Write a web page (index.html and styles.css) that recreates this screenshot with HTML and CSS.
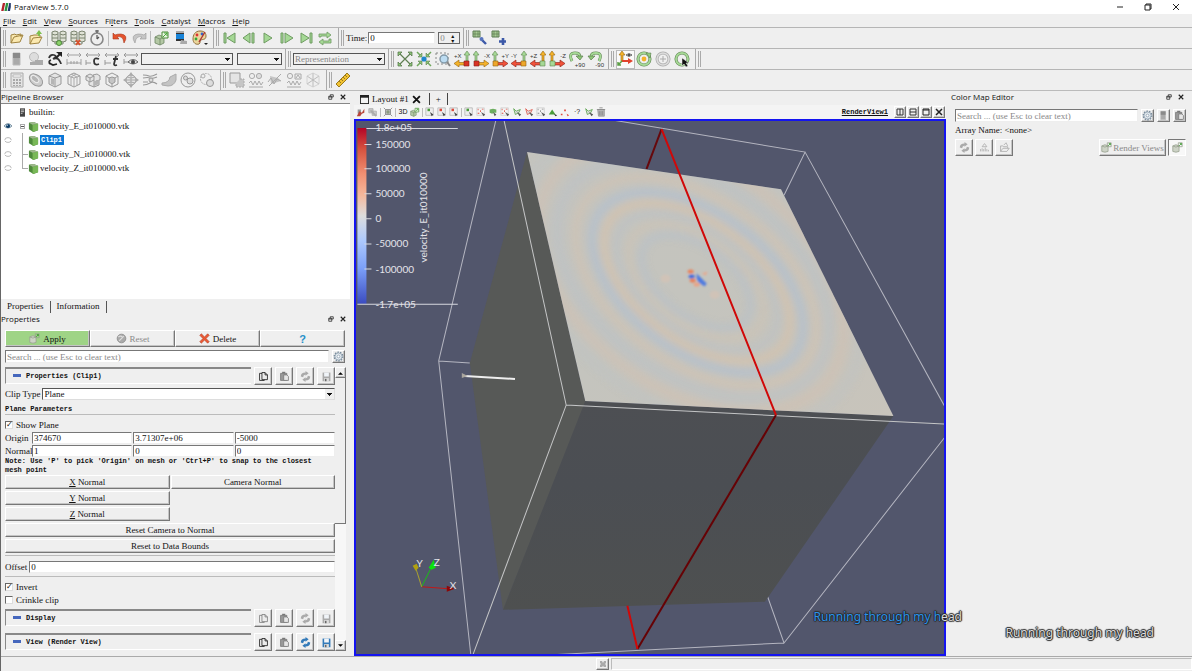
FILE: index.html
```
<!DOCTYPE html>
<html lang="en">
<head>
  <meta charset="UTF-8" />
  <meta name="viewport" content="width=device-width, initial-scale=1.0" />
  <title>ParaView 5.7.0</title>
  <link rel="stylesheet" href="styles.css">
</head>
<body>
  <!-- icon set -->
  <svg class="defs" aria-hidden="true">
    <symbol id="folder" viewBox="0 0 16 16"><path d="M2 13V5l4-1 1 1 5-1v3M2 13l3-6 9-2-3 7z" fill="#fbe9b0" stroke="#a08440"/></symbol>
    <symbol id="folder-up" viewBox="0 0 16 16"><path d="M2 14V6l4-1 6 0v3M2 14l3-6 9-1-3 6z" fill="#fbe9b0" stroke="#a08440"/><path d="M10 6V4H8l3-4 3 4h-2v2z" fill="#7cc04c"/></symbol>
    <symbol id="server" viewBox="0 0 16 16"><path d="M1 2q3-2 6 0v9q-3 2-6 0zM9 2q3-2 6 0v9q-3 2-6 0z" fill="#dfe2d6" stroke="#7b8470"/><path d="M1 4q3 2 6 0m2 0q3 2 6 0M1 8h6m2 0h6M4 12v2h8v-2" fill="none" stroke="#7b8470"/></symbol>
    <symbol id="server-on" viewBox="0 0 16 16"><use href="#server"/><circle cx="8" cy="13" r="2.5" fill="#8ed36c" stroke="#4b8a38"/></symbol>
    <symbol id="server-off" viewBox="0 0 16 16"><use href="#server"/><path d="M6 10l4 5m0-5l-4 5" stroke="#d8512c" stroke-width="2"/></symbol>
    <symbol id="timer" viewBox="0 0 16 16"><circle cx="8" cy="9" r="6" fill="#eee" stroke="#888" stroke-width="1.600"/><path d="M8 9V5m0 4l2-2M8 0v3M6 1h4" stroke="#555" stroke-width="1.2"/></symbol>
    <symbol id="undo" viewBox="0 0 16 16"><path d="M1 3v6h6L5 7q6-2 7 6 5-8-3-9-4 0-6 1z" fill="#e5532d" stroke="#a8371c" stroke-width=".6"/></symbol>
    <symbol id="redo" viewBox="0 0 16 16"><path d="M15 3v6H9l2-2q-6-2-7 6-5-8 3-9 4 0 6 1z" fill="#c6c6c6" stroke="#999" stroke-width=".6"/></symbol>
    <symbol id="cube-arrow" viewBox="0 0 16 16"><path d="M1 7l4-2 5 2v6l-4 2-5-2z" fill="#b4c8a5" stroke="#6d8563" stroke-width=".8"/><path d="M1 7l5 2 4-2M6 9v6" fill="none" stroke="#6d8563" stroke-width=".8"/><path d="M8 2h6v6H8z" fill="#e9f4e2" stroke="#4b8a38"/><path d="M9 7l4-4m-3 0h3v3" fill="none" stroke="#4aa63a"/></symbol>
    <symbol id="zoom-data" viewBox="0 0 16 16"><path d="M3 1h8v10H3z" fill="#333"/><path d="M3 4h8v5H3z" fill="#1984d8"/><path d="M3 1h8v2H3zM8 10l6 1v3H7z" fill="#aaa"/></symbol>
    <symbol id="palette" viewBox="0 0 16 16"><path d="M8 1C3 1 1 5 1 9s3 6 6 5c2-1 0-3 2-4s5 0 5-4-3-5-6-5z" fill="#ecd49c" stroke="#8f713c"/><circle cx="5" cy="5" r="1.4" fill="#d33"/><circle cx="10" cy="4" r="1.4" fill="#36c"/><circle cx="4" cy="9" r="1.4" fill="#3a3"/><path d="M13 2L7 12" stroke="#a33" stroke-width="1.4"/><path d="M12 13h4l-2 2z" fill="#222"/></symbol>
    <symbol id="first" viewBox="0 0 16 16"><path d="M2 3h2v10H2zM13 3v10L5 8z" fill="#a5d895" stroke="#6f9b62"/></symbol>
    <symbol id="last" viewBox="0 0 16 16"><path d="M12 3h2v10h-2zM3 3v10l8-5z" fill="#a5d895" stroke="#6f9b62"/></symbol>
    <symbol id="prev" viewBox="0 0 16 16"><path d="M11 3h2v10h-2zM9 3v10L2 8z" fill="#a5d895" stroke="#6f9b62"/></symbol>
    <symbol id="next" viewBox="0 0 16 16"><path d="M2 3h2v10H2zM6 3v10l8-5z" fill="#a5d895" stroke="#6f9b62"/></symbol>
    <symbol id="play" viewBox="0 0 16 16"><path d="M4 3v10l8-5z" fill="#a5d895" stroke="#6f9b62"/></symbol>
    <symbol id="loop" viewBox="0 0 16 16"><path d="M2 7V4h8V2l4 3-4 3V6H4v1zM14 9v4H6v2l-4-3 4-3v2h6V9z" fill="#a5d895" stroke="#6f9b62" stroke-width=".8"/></symbol>
    <symbol id="wrench" viewBox="0 0 16 16"><path d="M1 1h7v6H1z" fill="#a9cc95" stroke="#5d7c52"/><path d="M3 1v6M1 4h7M6 1v6" stroke="#5d7c52" stroke-width=".7"/><path d="M9 9l5 5" stroke="#3c59a8" stroke-width="2.4"/><circle cx="9.500" cy="9" r="2" fill="#5774bd"/></symbol>
    <symbol id="wrench-plus" viewBox="0 0 16 16"><path d="M1 1h7v6H1z" fill="#a9cc95" stroke="#5d7c52"/><path d="M3 1v6M1 4h7M6 1v6" stroke="#5d7c52" stroke-width=".7"/><path d="M12 8v7M8 11.500h7" stroke="#3c59a8" stroke-width="2.600"/></symbol>
    <symbol id="legend" viewBox="0 0 16 16"><path d="M4 2h7v12H4z" fill="#aaa" stroke="#bbb"/><path d="M4 2h7v5H4z" fill="#8a8a8a"/></symbol>
    <symbol id="shapes" viewBox="0 0 16 16"><circle cx="6" cy="6" r="4.500" fill="#ddd" stroke="#bbb"/><path d="M7 9h8v5H7zM2 11h5v3H2z" fill="#aaa"/></symbol>
    <symbol id="rescale-data" viewBox="0 0 16 16"><path d="M2 7q1-4 5-3t-1 4q4-2 6 1t2 4M3 13q-2-3 1-4" fill="none" stroke="#333" stroke-width="1.800"/><path d="M9 1h6v5z" fill="#222"/><path d="M9 7l4-4M2 12l4 2 4-1" fill="none" stroke="#222" stroke-width="1.800"/></symbol>
    <symbol id="range" viewBox="0 0 16 16"><path d="M1 4h14M3 2L1 4l2 2m10-4l2 2-2 2M1 8v6m14-6v6M1 12h14M5 10v3m3-3v3m3-3v3" fill="none" stroke="#999" stroke-width=".9"/></symbol>
    <symbol id="range-c" viewBox="0 0 16 16"><path d="M1 4h14M3 2L1 4l2 2m10-4l2 2-2 2M1 9v5m0-2h5" fill="none" stroke="#999"/><path d="M14 8q-5-2-5 2 0 5 5 3" fill="none" stroke="#333" stroke-width="1.800"/></symbol>
    <symbol id="range-t" viewBox="0 0 16 16"><path d="M1 4h14M3 2L1 4l2 2m10-4l2 2-2 2M1 9v5m0-2h6" fill="none" stroke="#999"/><path d="M12 5l-2 8q0 2 3 1M9 8h5" fill="none" stroke="#333" stroke-width="1.800"/></symbol>
    <symbol id="range-eye" viewBox="0 0 16 16"><path d="M1 4h14M3 2L1 4l2 2m10-4l2 2-2 2M1 8v5m0-2h5" fill="none" stroke="#999"/><path d="M5 11q5-5 10 0-5 4-10 0z" fill="#ddd" stroke="#666"/><circle cx="10" cy="11" r="2" fill="#444"/></symbol>
    <symbol id="reset" viewBox="0 0 16 16"><path d="M3 3l10 10M13 3L3 13" stroke="#5f7e52" stroke-width="1.200"/><path d="M1 1h4L1 5zM15 1v4l-4-4zM1 15v-4l4 4zM15 15h-4l4-4z" fill="#8dc578" stroke="#4f6e42" stroke-width=".7"/></symbol>
    <symbol id="zoom-to" viewBox="0 0 16 16"><path d="M1 1l4 4m10-4l-4 4M1 15l4-4m10 4l-4-4" stroke="#6fa75b" stroke-width="1.500"/><path d="M6 2v4H2zM10 2v4h4zM6 14v-4H2zM10 14v-4h4z" fill="#8dc578" stroke="#4f6e42" stroke-width=".5"/><circle cx="8" cy="8" r="2.600" fill="#1e86cd"/></symbol>
    <symbol id="zoom-box" viewBox="0 0 16 16"><path d="M1 2h12v11H1z" fill="none" stroke="#888" stroke-dasharray="2 2"/><circle cx="9" cy="8" r="4" fill="#bcdcf2" stroke="#8399a8" stroke-width="1.500"/><path d="M12 11l3 4" stroke="#888" stroke-width="2"/></symbol>
    <symbol id="ax-left" viewBox="0 0 16 16"><path d="M12 10V4h-2l3-4 3 4h-2v6z" fill="#a5d895" stroke="#5f8352" stroke-width=".6"/><path d="M11 11.500H5V9l-5 3.500L5 16v-2h6z" fill="#f4b22a" stroke="#926311" stroke-width=".6"/><path d="M10 10h5v5h-5z" fill="#d93425" stroke="#842018" stroke-width=".6"/></symbol>
    <symbol id="ax-right" viewBox="0 0 16 16"><path d="M2 10V4H0l3-4 3 4H4v6z" fill="#a5d895" stroke="#5f8352" stroke-width=".6"/><path d="M5 11.500h6V9l5 3.500L11 16v-2H5z" fill="#f0523a" stroke="#842018" stroke-width=".6"/><path d="M1 10h5v5H1z" fill="#eea72b" stroke="#926311" stroke-width=".6"/></symbol>
    <symbol id="ax-minus-x" viewBox="0 0 16 16"><path d="M2 10V4H0l3-4 3 4H4v6z" fill="#a5d895" stroke="#5f8352" stroke-width=".6"/><path d="M5 11.500h6V9l5 3.500L11 16v-2H5z" fill="#f4b22a" stroke="#926311" stroke-width=".6"/><path d="M1 10h5v5H1z" fill="#d93425" stroke="#842018" stroke-width=".6"/></symbol>
    <symbol id="ax-minus-y" viewBox="0 0 16 16"><path d="M12 10V4h-2l3-4 3 4h-2v6z" fill="#a5d895" stroke="#5f8352" stroke-width=".6"/><path d="M11 11.500H5V9l-5 3.500L5 16v-2h6z" fill="#f0523a" stroke="#842018" stroke-width=".6"/><path d="M10 10h5v5h-5z" fill="#eea72b" stroke="#926311" stroke-width=".6"/></symbol>
    <symbol id="ax-plus-z" viewBox="0 0 16 16"><path d="M12 10V4h-2l3-4 3 4h-2v6z" fill="#f4b22a" stroke="#926311" stroke-width=".6"/><path d="M11 11.500H5V9l-5 3.500L5 16v-2h6z" fill="#f0523a" stroke="#842018" stroke-width=".6"/><path d="M10 10h5v5h-5z" fill="#a5d895" stroke="#5f8352" stroke-width=".6"/></symbol>
    <symbol id="ax-minus-z" viewBox="0 0 16 16"><path d="M2 10V4H0l3-4 3 4H4v6z" fill="#f4b22a" stroke="#926311" stroke-width=".6"/><path d="M5 11.500h6V9l5 3.500L11 16v-2H5z" fill="#f0523a" stroke="#842018" stroke-width=".6"/><path d="M1 10h5v5H1z" fill="#a5d895" stroke="#5f8352" stroke-width=".6"/></symbol>
    <symbol id="rot-r" viewBox="0 0 16 16"><path d="M4 10Q0 2 7 2q5 0 5 4" fill="none" stroke="#5f8352" stroke-width="2.800"/><path d="M4 10Q0 2 7 2q5 0 5 4" fill="none" stroke="#a5d895" stroke-width="1.800"/><path d="M8 5h7l-3 4z" fill="#8dc578" stroke="#4f6e42" stroke-width=".6"/></symbol>
    <symbol id="rot-l" viewBox="0 0 16 16"><path d="M12 10q4-8-3-8-5 0-5 4" fill="none" stroke="#5f8352" stroke-width="2.800"/><path d="M12 10q4-8-3-8-5 0-5 4" fill="none" stroke="#a5d895" stroke-width="1.800"/><path d="M1 5h7L4 9z" fill="#8dc578" stroke="#4f6e42" stroke-width=".6"/></symbol>
    <symbol id="orient" viewBox="0 0 16 16"><path d="M4 10V4H2l3-4 3 4H6v6z" fill="#f4b22a" stroke="#926311" stroke-width=".6"/><path d="M5 9h6V7l5 3-5 3v-2H5z" fill="#e1432e"/><path d="M5 10l-4 4m0-3v3h3" fill="none" stroke="#5b9e45" stroke-width="1.500"/><path d="M9 4q3-3 6 0-3 3-6 0z" fill="#fff" stroke="#444" stroke-width=".8"/><circle cx="12" cy="4" r="1" fill="#222"/></symbol>
    <symbol id="center" viewBox="0 0 16 16"><circle cx="8" cy="8" r="6" fill="none" stroke="#5f8352" stroke-width="3"/><circle cx="8" cy="8" r="6" fill="none" stroke="#a5d895" stroke-width="1.800"/><path d="M10 2l5 0-1 5z" fill="#93cf80" stroke="#4f6e42" stroke-width=".5"/><circle cx="8" cy="8" r="2.400" fill="#f4b22a"/></symbol>
    <symbol id="center-off" viewBox="0 0 16 16"><circle cx="8" cy="8" r="6" fill="none" stroke="#aaa" stroke-width="3"/><circle cx="8" cy="8" r="6" fill="none" stroke="#dcdcdc" stroke-width="1.600"/><path d="M8 5v6M5 8h6" stroke="#aaa"/></symbol>
    <symbol id="pick" viewBox="0 0 16 16"><circle cx="8" cy="8" r="6" fill="none" stroke="#5f8352" stroke-width="3"/><circle cx="8" cy="8" r="6" fill="none" stroke="#a5d895" stroke-width="1.800"/><path d="M8 7v8l2-2 2 3 2-1-2-3h3z" fill="#111" stroke="#eee" stroke-width=".5"/></symbol>
    <symbol id="calc" viewBox="0 0 16 16"><path d="M2 1h12v14H2z" fill="#e4e4e4" stroke="#aaa"/><path d="M4 3h8v2H4z" fill="#fff" stroke="#999" stroke-width=".6"/><path d="M5 7v7m3-7v7m3-7v7" stroke="#999" stroke-width="1.600" stroke-dasharray="2 1"/></symbol>
    <symbol id="contour" viewBox="0 0 16 16"><ellipse cx="8" cy="8" rx="7.500" ry="5" transform="rotate(40 8 8)" fill="#ccc" stroke="#999"/><ellipse cx="7" cy="7" rx="4.500" ry="2.500" transform="rotate(40 7 7)" fill="#b5b5b5" stroke="#eee"/></symbol>
    <symbol id="cube" viewBox="0 0 16 16"><path d="M2 4l6-3 6 3v8l-6 3-6-3z" fill="#e4e4e4" stroke="#999"/><path d="M2 4l6 2 6-2M8 6v9" fill="none" stroke="#999"/><path d="M4 6l3 1v6l-3-1z" fill="#b5b5b5"/></symbol>
    <symbol id="cube2" viewBox="0 0 16 16"><path d="M2 4l6-3 6 3v8l-6 3-6-3z" fill="#eee" stroke="#999"/><path d="M2 4l6 2 6-2M8 6v9M5 2l6 3v8M10 2L5 5v8" fill="none" stroke="#aaa"/></symbol>
    <symbol id="cube3" viewBox="0 0 16 16"><path d="M2 4l6-3 6 3v8l-6 3-6-3z" fill="#eee" stroke="#999"/><path d="M5 6l3-1 3 1v4l-3 2-3-2z" fill="#c5c5c5" stroke="#999"/><path d="M2 4l3 2m9-2l-3 2m-3 6v3" stroke="#999"/></symbol>
    <symbol id="blocks" viewBox="0 0 16 16"><path d="M1 4l4-2 4 2v4l-4 2-4-2zM8 3l4-1 3 2v4l-4 1M4 10v3l5 2 5-2V9" fill="#e4e4e4" stroke="#999"/><path d="M1 4l4 2 4-2M5 6v4m4-2v7" fill="none" stroke="#999"/><path d="M9 9l5-1v4l-5 2z" fill="#b5b5b5"/></symbol>
    <symbol id="glyph" viewBox="0 0 16 16"><circle cx="8" cy="8" r="5" fill="#e4e4e4" stroke="#999"/><path d="M8 3v10M3 8h10M4 5q4 2 8 0M4 11q4-2 8 0" fill="none" stroke="#aaa"/><path d="M8 0l2 3H6zM8 16l2-3H6zM0 8l3-2v4zM16 8l-3-2v4z" fill="#aaa"/></symbol>
    <symbol id="stream" viewBox="0 0 16 16"><path d="M1 3q4 0 6 1t8-2M1 6q5-1 7 0t7-1M1 13q4 0 7-2t7 1M1 10h5" fill="none" stroke="#999" stroke-width="1.200"/><circle cx="9" cy="8" r="2" fill="#ddd" stroke="#999"/></symbol>
    <symbol id="warp" viewBox="0 0 16 16"><path d="M1 11q7 0 8-6l6-3v6q-2 6-8 6l-6-1z" fill="#c4c4c4" stroke="#aaa"/></symbol>
    <symbol id="group" viewBox="0 0 16 16"><circle cx="8" cy="8" r="7" fill="#eee" stroke="#999"/><circle cx="5.500" cy="6" r="2" fill="#ddd" stroke="#999"/><circle cx="10" cy="9" r="3" fill="#ddd" stroke="#999"/></symbol>
    <symbol id="extract" viewBox="0 0 16 16"><circle cx="7" cy="7" r="5.500" fill="none" stroke="#aaa" stroke-dasharray="2 1"/><circle cx="4" cy="4" r="2" fill="#eee" stroke="#aaa"/><circle cx="11" cy="11" r="3.500" fill="#ddd" stroke="#999"/></symbol>
    <symbol id="select" viewBox="0 0 16 16"><path d="M1 1h10v10H1z" fill="#e4e4e4" stroke="#999"/><path d="M11 7h4v8H7v-4" fill="#c5c5c5" stroke="#aaa" stroke-dasharray="2 1"/></symbol>
    <symbol id="plot" viewBox="0 0 16 16"><circle cx="4" cy="4" r="2.600" fill="#eee" stroke="#aaa"/><circle cx="11" cy="4" r="2.600" fill="#ddd" stroke="#aaa"/><path d="M1 11l2-2 2 4 2-4 2 4 2-4 2 4 2-3M1 15h14" fill="none" stroke="#aaa"/></symbol>
    <symbol id="plot-sel" viewBox="0 0 16 16"><circle cx="4" cy="4" r="2.600" fill="#eee" stroke="#aaa"/><path d="M9 2h6v5H9zM10 6l2-3 2 3" fill="none" stroke="#aaa"/><path d="M1 11l2-2 2 4 2-4 2 4 2-4 2 4 2-3M1 15h14" fill="none" stroke="#aaa"/></symbol>
    <symbol id="plot-line" viewBox="0 0 16 16"><path d="M3 4l8 2 3 3-10 3z" fill="#c5c5c5"/><path d="M2 14L14 2M1 10l3-4 3 6 3-5 4 2" fill="none" stroke="#aaa"/></symbol>
    <symbol id="probe" viewBox="0 0 16 16"><path d="M8 1v14M2 4l12 8M14 4L2 12" fill="none" stroke="#bbb"/><path d="M2 4l6-3 6 3v8l-6 3-6-3z" fill="none" stroke="#ccc" stroke-width=".8"/></symbol>
    <symbol id="ruler" viewBox="0 0 16 16"><path d="M1 12L12 1l3 3L4 15z" fill="#f1c232" stroke="#9a7a1c"/><path d="M4 9l2 2m0-4l2 2m0-4l2 2m0-4l2 2" stroke="#9a7a1c"/></symbol>
    <symbol id="block" viewBox="0 0 12 12"><path d="M1 2l5-1 5 2v7l-5 2-5-3z" fill="#4f8a3c"/><path d="M5 4l6-1v7l-6 2z" fill="#79b857"/><path d="M1 2l5-1 5 2-6 1z" fill="#a0b98e"/></symbol>
    <symbol id="eye" viewBox="0 0 12 10"><path d="M1 5q5-6 10 0-5 5-10 0z" fill="#cfe3ef" stroke="#6a8090"/><circle cx="6" cy="5" r="2.600" fill="#0b3c66"/><circle cx="5" cy="4" r=".8" fill="#fff"/></symbol>
    <symbol id="eye-off" viewBox="0 0 12 10"><path d="M2 5q0-3 4-3t4 3M2 6q1 2 4 2t4-2" fill="none" stroke="#aaa"/></symbol>
    <symbol id="copy" viewBox="0 0 14 14"><path d="M2 3h6v9H2z" fill="#f4f4f4" stroke="currentColor"/><path d="M5 2h4l3 3v6H5z" fill="#ececec" stroke="currentColor"/><path d="M9 2v3h3" fill="none" stroke="currentColor"/></symbol>
    <symbol id="paste" viewBox="0 0 14 14"><path d="M2 3h8v9H2z" fill="#999" stroke="currentColor"/><path d="M4 1h4v2H4z" fill="currentColor"/><path d="M6 5h4l2 2v5H6z" fill="#e6e6e6" stroke="currentColor"/></symbol>
    <symbol id="reload" viewBox="0 0 14 14"><path d="M1 7q0-5 6-5V0l4 3-4 3V4.500Q4 5 4 8zM13 7q0 5-6 5v2l-4-3 4-3v1.500Q10 9 10 6z" fill="currentColor"/></symbol>
    <symbol id="save" viewBox="0 0 14 14"><path d="M2 2h10v11H2z" fill="currentColor"/><path d="M4 2h6v5H4z" fill="#f0f4f8"/><path d="M4 9h6v4H4z" fill="#ddd"/><path d="M5 10h2v3H5z" fill="#666"/></symbol>
    <symbol id="gear" viewBox="0 0 14 14"><circle cx="7" cy="7" r="5.500" fill="none" stroke="#75899a" stroke-width="1.600" stroke-dasharray="2 1.400"/><circle cx="7" cy="7" r="4.500" fill="#e3ebf1" stroke="#8b9cab"/><circle cx="7" cy="7" r="1.800" fill="#fff" stroke="#8b9cab"/></symbol>
    <symbol id="apply" viewBox="0 0 14 14"><path d="M1 5q4-3 8 0v7q-4 2-8 0z" fill="#cdd3c6" stroke="#98a18f"/><path d="M1 5q4 3 8 0M8 1h5v5H8z" fill="none" stroke="#98a18f"/><path d="M9 5l3-3m-2 0h2v2" stroke="#3b9a2f" fill="none"/></symbol>
    <symbol id="stop" viewBox="0 0 14 14"><circle cx="7" cy="7" r="5.500" fill="#aaa" stroke="#888"/><path d="M3 5q3-2 5 0M4 10l6-6" fill="none" stroke="#ddd" stroke-width="1.500"/></symbol>
    <symbol id="cross" viewBox="0 0 14 14"><path d="M3 1l4 4 4-4 2 2-4 4 4 4-2 2-4-4-4 4-2-2 4-4-4-4z" fill="#ea5b36" stroke="#ad3319" stroke-width=".7"/></symbol>
    <symbol id="v-undo" viewBox="0 0 12 12"><path d="M2 3h4v5H2z" fill="#999"/><path d="M1 11l3-6 3 2 3-5v5L7 8l-2 3z" fill="#b8453a"/></symbol>
    <symbol id="v-redo" viewBox="0 0 12 12"><path d="M1 2h5v5H1zM5 5h5v5H5z" fill="#ccc" stroke="#aaa"/><path d="M3 4l7 7" stroke="#aaa" stroke-width="2"/></symbol>
    <symbol id="v-cam" viewBox="0 0 12 12"><path d="M1 1l2 2m8-2L9 3M1 11l2-2m8 2L9 9M3 3h6v6H3z" fill="#bbb" stroke="#888"/><circle cx="6" cy="6" r="2" fill="#8b9b80"/></symbol>
    <symbol id="v-sel" viewBox="0 0 12 12"><path d="M1 1h9v9H1z" fill="#eee" stroke="#aaa" stroke-width=".8"/><path d="M3 2h3v3H3z" fill="currentColor"/><path d="M6 6l4 3-2 2z" fill="#444"/></symbol>
    <symbol id="v-pts" viewBox="0 0 12 12"><path d="M2 2h1v2H2zM7 2h2v1H7zM2 7h2v1H2zM5 4h1v2H5z" fill="currentColor"/><path d="M1 1h9v9H1z" fill="none" stroke="#bbb" stroke-width=".6"/><path d="M6 6l5 3-2 2z" fill="#555"/></symbol>
    <symbol id="v-poly" viewBox="0 0 12 12"><path d="M2 3l4-1 4 1v4H7L5 8 2 7z" fill="currentColor" opacity=".8"/><path d="M6 6l4 3-2 2z" fill="#555"/></symbol>
    <symbol id="v-lasso" viewBox="0 0 12 12"><path d="M2 2l3 3 5-2-2 4-4 2z" fill="#ddd" stroke="currentColor" stroke-width=".9"/><path d="M6 6l5 3-2 2z" fill="#555"/></symbol>
    <symbol id="v-tri" viewBox="0 0 12 12"><path d="M1 9l4-6 4 6z" fill="currentColor"/><path d="M7 8l4 2-2 1z" fill="#333"/></symbol>
    <symbol id="v-dots" viewBox="0 0 12 12"><path d="M1 8h2v2H1zM5 3h2v2H5zM8 8l3 2-2 1z" fill="currentColor"/></symbol>
    <symbol id="trash" viewBox="0 0 12 12"><path d="M2 3h8v8H3z" fill="#b5b5b5" stroke="#999"/><path d="M1 3h10M4 1h4M4 5v5m2-5v5m2-5v5" stroke="#888"/></symbol>
    <symbol id="restore" viewBox="0 0 8 8"><path d="M3 3V1h4v3H5M1 3h4v4H1zM1 4h4" fill="none" stroke="#222"/></symbol>
    <symbol id="close" viewBox="0 0 8 8"><path d="M1 1l6 6M7 1L1 7" stroke="#222" stroke-width="1.500"/></symbol>
  </svg>

  <header class="title-bar">
    <svg class="logo" viewBox="0 0 12 10"><path d="M2 0h3L3 10H0z" fill="#b3252c"/><path d="M6 0h3L7 10H4z" fill="#2b9340"/><path d="M10 0h2v5l-1 5H8z" fill="#21386d"/></svg>
    <span class="app-name">ParaView 5.7.0</span>
    <svg class="win" viewBox="0 0 8 8"><path d="M1 4h6" stroke="#222"/></svg>
    <svg class="win" viewBox="0 0 8 8"><path d="M1 2h5v5H1zM2 2V1h5v5H6" fill="none" stroke="#222"/></svg>
    <svg class="win" viewBox="0 0 8 8"><path d="M1 1l6 6M7 1L1 7" stroke="#222"/></svg>
  </header>

  <nav class="menu-bar">
    <a href="#"><u>F</u>ile</a><a href="#"><u>E</u>dit</a><a href="#"><u>V</u>iew</a><a href="#"><u>S</u>ources</a><a href="#">Fi<u>l</u>ters</a><a href="#"><u>T</u>ools</a><a href="#"><u>C</u>atalyst</a><a href="#"><u>M</u>acros</a><a href="#"><u>H</u>elp</a>
  </nav>

  <div class="frame">
    <div class="toolbar">
      <div class="group">
        <button aria-label="Open"><svg><use href="#folder"/></svg></button>
        <button aria-label="Load state"><svg><use href="#folder-up"/></svg></button>
        <i></i>
        <button aria-label="Connect"><svg><use href="#server-on"/></svg></button>
        <button aria-label="Disconnect"><svg><use href="#server-off"/></svg></button>
        <button aria-label="Timer"><svg><use href="#timer"/></svg></button>
        <i></i>
        <button aria-label="Undo"><svg><use href="#undo"/></svg></button>
        <button aria-label="Redo"><svg><use href="#redo"/></svg></button>
        <i></i>
        <button aria-label="Auto apply"><svg><use href="#cube-arrow"/></svg></button>
        <button aria-label="Find data"><svg><use href="#zoom-data"/></svg></button>
        <button aria-label="Palette"><svg><use href="#palette"/></svg></button>
      </div>
      <div class="group">
        <button aria-label="First frame"><svg><use href="#first"/></svg></button>
        <button aria-label="Previous frame"><svg><use href="#prev"/></svg></button>
        <button aria-label="Play"><svg><use href="#play"/></svg></button>
        <button aria-label="Next frame"><svg><use href="#next"/></svg></button>
        <button aria-label="Last frame"><svg><use href="#last"/></svg></button>
        <button aria-label="Loop"><svg><use href="#loop"/></svg></button>
      </div>
      <div class="group">
        <label for="time">Time:</label>
        <input id="time" class="field time" value="0">
        <span class="spin"><input aria-label="Time step" value="0"><b>▴<br>▾</b></span>
      </div>
      <div class="group last">
        <button aria-label="Favorites"><svg><use href="#wrench"/></svg></button>
        <button aria-label="Add favorite"><svg><use href="#wrench-plus"/></svg></button>
      </div>
    </div>

    <div class="toolbar">
      <div class="group">
        <button aria-label="Color legend"><svg><use href="#legend"/></svg></button>
        <button aria-label="Edit color map"><svg><use href="#shapes"/></svg></button>
        <button aria-label="Separate color map"><svg><use href="#rescale-data"/></svg></button>
        <button aria-label="Rescale to data"><svg><use href="#range"/></svg></button>
        <button aria-label="Rescale to custom"><svg><use href="#range-c"/></svg></button>
        <button aria-label="Rescale over time"><svg><use href="#range-t"/></svg></button>
        <button aria-label="Rescale to visible"><svg><use href="#range-eye"/></svg></button>
        <select class="combo off array" aria-label="Array"><option></option></select>
        <select class="combo off part" aria-label="Component"><option></option></select>
      </div>
      <div class="group">
        <select class="combo off array" aria-label="Representation"><option>Representation</option></select>
      </div>
      <div class="group">
        <button aria-label="Reset"><svg><use href="#reset"/></svg></button>
        <button aria-label="Zoom to data"><svg><use href="#zoom-to"/></svg></button>
        <button aria-label="Zoom to box"><svg><use href="#zoom-box"/></svg></button>
        <button class="axis l"><svg><use href="#ax-left"/></svg><em>+X</em></button>
        <button class="axis r"><svg><use href="#ax-minus-x"/></svg><em>-X</em></button>
        <button class="axis r"><svg><use href="#ax-right"/></svg><em>+Y</em></button>
        <button class="axis l"><svg><use href="#ax-minus-y"/></svg><em>-Y</em></button>
        <button class="axis l"><svg><use href="#ax-plus-z"/></svg><em>+Z</em></button>
        <button class="axis r"><svg><use href="#ax-minus-z"/></svg><em>-Z</em></button>
        <button class="axis d"><svg><use href="#rot-r"/></svg><em>+90</em></button>
        <button class="axis d"><svg><use href="#rot-l"/></svg><em>-90</em></button>
      </div>
      <div class="group">
        <button class="down" aria-label="Orientation axes"><svg><use href="#orient"/></svg></button>
        <button aria-label="Show center"><svg><use href="#center"/></svg></button>
        <button aria-label="Reset center"><svg><use href="#center-off"/></svg></button>
        <button aria-label="Pick center"><svg><use href="#pick"/></svg></button>
      </div>
      <div class="group last"></div>
    </div>

    <div class="toolbar">
      <div class="group">
        <button aria-label="Calculator"><svg><use href="#calc"/></svg></button>
        <button aria-label="Contour"><svg><use href="#contour"/></svg></button>
        <button aria-label="Clip"><svg><use href="#cube"/></svg></button>
        <button aria-label="Slice"><svg><use href="#cube2"/></svg></button>
        <button aria-label="Threshold"><svg><use href="#blocks"/></svg></button>
        <button aria-label="Extract subset"><svg><use href="#cube3"/></svg></button>
        <button aria-label="Glyph"><svg><use href="#glyph"/></svg></button>
        <button aria-label="Stream tracer"><svg><use href="#stream"/></svg></button>
        <button aria-label="Warp"><svg><use href="#warp"/></svg></button>
        <button aria-label="Group datasets"><svg><use href="#group"/></svg></button>
        <button aria-label="Extract level"><svg><use href="#extract"/></svg></button>
      </div>
      <div class="group">
        <button aria-label="Extract selection"><svg><use href="#select"/></svg></button>
        <button aria-label="Plot global variables"><svg><use href="#plot"/></svg></button>
        <button aria-label="Plot over line"><svg><use href="#plot-line"/></svg></button>
        <button aria-label="Plot selection"><svg><use href="#plot-sel"/></svg></button>
        <button aria-label="Probe"><svg><use href="#probe"/></svg></button>
      </div>
      <div class="group last">
        <button aria-label="Ruler"><svg><use href="#ruler"/></svg></button>
      </div>
    </div>

    <main class="work">
      <aside class="left">
        <div class="dock-title"><span>Pipeline Browser</span><svg><use href="#restore"/></svg><svg><use href="#close"/></svg></div>
        <ul class="tree">
          <li><svg class="host" viewBox="0 0 6 10"><path d="M0 0h6v10H0z" fill="#444"/><path d="M1 2h4M1 4h4M1 6h2" stroke="#ddd"/></svg>builtin:</li>
          <li><svg class="eye"><use href="#eye"/></svg><span class="branch box"></span><svg class="block"><use href="#block"/></svg>velocity_E_it010000.vtk</li>
          <li><svg class="eye"><use href="#eye-off"/></svg><span class="branch through"></span><svg class="block"><use href="#block"/></svg><strong>Clip1</strong></li>
          <li><svg class="eye"><use href="#eye-off"/></svg><span class="branch tee"></span><svg class="block"><use href="#block"/></svg>velocity_N_it010000.vtk</li>
          <li><svg class="eye"><use href="#eye-off"/></svg><span class="branch end"></span><svg class="block"><use href="#block"/></svg>velocity_Z_it010000.vtk</li>
        </ul>
        <div class="tabs"><a href="#">Properties</a><a href="#">Information</a></div>
        <div class="dock-title"><span>Properties</span><svg><use href="#restore"/></svg><svg><use href="#close"/></svg></div>
        <div class="actions">
          <button class="bevel apply"><svg><use href="#apply"/></svg>Apply</button>
          <button class="bevel" disabled><svg><use href="#stop"/></svg>Reset</button>
          <button class="bevel"><svg><use href="#cross"/></svg>Delete</button>
          <button class="bevel help">?</button>
        </div>
        <div class="search">
          <input class="field" aria-label="Search properties" placeholder="Search ... (use Esc to clear text)">
          <button class="bevel tool" aria-label="Advanced"><svg><use href="#gear"/></svg></button>
        </div>
        <div class="props">
          <form class="form">
            <div class="section">
              <h2>Properties (Clip1)</h2>
              <button type="button" class="bevel tool" aria-label="Copy"><svg><use href="#copy"/></svg></button>
              <button type="button" class="bevel tool dim" aria-label="Paste"><svg><use href="#paste"/></svg></button>
              <button type="button" class="bevel tool faint" aria-label="Reload"><svg><use href="#reload"/></svg></button>
              <button type="button" class="bevel tool faint" aria-label="Save"><svg><use href="#save"/></svg></button>
            </div>
            <div class="line clip"><label for="clip">Clip Type</label><select id="clip" class="combo"><option>Plane</option></select></div>
            <h3>Plane Parameters</h3>
            <label class="check"><input type="checkbox" checked>Show Plane</label>
            <div class="line vec"><label for="ox">Origin</label><input id="ox" class="field" value="374670"><input class="field" aria-label="Origin Y" value="3.71307e+06"><input class="field" aria-label="Origin Z" value="-5000"></div>
            <div class="line vec"><label for="nx">Normal</label><input id="nx" class="field" value="1"><input class="field" aria-label="Normal Y" value="0"><input class="field" aria-label="Normal Z" value="0"></div>
            <p class="note">Note: Use 'P' to pick 'Origin' on mesh or 'Ctrl+P' to snap to the closest mesh point</p>
            <div class="normals">
              <button type="button" class="bevel"><u>X</u>&nbsp;Normal</button>
              <button type="button" class="bevel">Camera Normal</button>
              <button type="button" class="bevel first"><u>Y</u>&nbsp;Normal</button>
              <button type="button" class="bevel first"><u>Z</u>&nbsp;Normal</button>
              <button type="button" class="bevel wide">Reset Camera to Normal</button>
              <button type="button" class="bevel wide">Reset to Data Bounds</button>
            </div>
            <div class="line offset"><label for="offset">Offset</label><input id="offset" class="field" value="0"></div>
            <label class="check"><input type="checkbox" checked>Invert</label>
            <label class="check"><input type="checkbox">Crinkle clip</label>
            <div class="section">
              <h2>Display</h2>
              <button type="button" class="bevel tool dim" aria-label="Copy"><svg><use href="#copy"/></svg></button>
              <button type="button" class="bevel tool dim" aria-label="Paste"><svg><use href="#paste"/></svg></button>
              <button type="button" class="bevel tool faint" aria-label="Reload"><svg><use href="#reload"/></svg></button>
              <button type="button" class="bevel tool faint" aria-label="Save"><svg><use href="#save"/></svg></button>
            </div>
            <div class="section">
              <h2>View (Render View)</h2>
              <button type="button" class="bevel tool" aria-label="Copy"><svg><use href="#copy"/></svg></button>
              <button type="button" class="bevel tool dim" aria-label="Paste"><svg><use href="#paste"/></svg></button>
              <button type="button" class="bevel tool blue" aria-label="Reload"><svg><use href="#reload"/></svg></button>
              <button type="button" class="bevel tool blue" aria-label="Save"><svg><use href="#save"/></svg></button>
            </div>
          </form>
          <div class="scroll">
            <button class="bevel" aria-label="Scroll up"><svg viewBox="0 0 6 4"><path d="M0 4l3-3 3 3z"/></svg></button>
            <div class="thumb"></div>
            <button class="bevel" aria-label="Scroll down"><svg viewBox="0 0 6 4"><path d="M0 0l3 3 3-3z"/></svg></button>
          </div>
        </div>
      </aside>

      <section class="center">
        <div class="layouts">
          <a href="#"><svg viewBox="0 0 10 10"><path d="M0 0h10v10H0z" fill="#222"/><path d="M1 3h8v6H1z" fill="#f4f4f4"/></svg>Layout #1<svg viewBox="0 0 8 8"><path d="M1 1l6 6M7 1L1 7" stroke="#111" stroke-width="1.600"/></svg></a>
          <a href="#">+</a>
        </div>
        <div class="view-bar">
          <button aria-label="Camera undo"><svg><use href="#v-undo"/></svg></button>
          <button aria-label="Camera redo"><svg><use href="#v-redo"/></svg></button>
          <i></i>
          <button aria-label="Capture"><svg><use href="#v-cam"/></svg></button>
          <i></i>
          <button class="three">3D</button>
          <button class="green" aria-label="Adjust camera"><svg><use href="#cube-arrow"/></svg></button>
          <i></i>
          <button class="green" aria-label="Select cells"><svg><use href="#v-sel"/></svg></button>
          <button class="red" aria-label="Select points"><svg><use href="#v-sel"/></svg></button>
          <button class="red" aria-label="Toggle selection"><svg><use href="#v-sel"/></svg></button>
          <i></i>
          <button class="green" aria-label="Cells on"><svg><use href="#v-sel"/></svg></button>
          <button class="red" aria-label="Points on"><svg><use href="#v-pts"/></svg></button>
          <button class="green" aria-label="Cells through"><svg><use href="#v-poly"/></svg></button>
          <button class="red" aria-label="Points through"><svg><use href="#v-pts"/></svg></button>
          <button class="green" aria-label="Polygon cells"><svg><use href="#v-lasso"/></svg></button>
          <button class="red" aria-label="Polygon points"><svg><use href="#v-lasso"/></svg></button>
          <button class="grey" aria-label="Select block"><svg><use href="#v-pts"/></svg></button>
          <button class="green" aria-label="Interactive cells"><svg><use href="#v-tri"/></svg></button>
          <button class="red" aria-label="Interactive points"><svg><use href="#v-dots"/></svg></button>
          <button class="three">·?</button>
          <button class="green" aria-label="Hover cells"><svg><use href="#v-lasso"/></svg></button>
          <button aria-label="Clear selection"><svg><use href="#trash"/></svg></button>
          <strong>RenderView1</strong>
          <button class="bevel split" aria-label="Split horizontal"><svg viewBox="0 0 8 8"><path d="M1 1h6v6H1zM4 1v6" fill="none" stroke="#333"/></svg></button>
          <button class="bevel split" aria-label="Split vertical"><svg viewBox="0 0 8 8"><path d="M1 1h6v6H1zM1 4h6" fill="none" stroke="#333"/></svg></button>
          <button class="bevel split" aria-label="Maximize"><svg viewBox="0 0 8 8"><path d="M1 1h6v6H1zM1 2h6" fill="none" stroke="#222"/></svg></button>
          <button class="bevel split" aria-label="Close"><svg><use href="#close"/></svg></button>
        </div>
        <div class="render">
          <svg viewBox="357 122 587 531" preserveAspectRatio="xMidYMid slice">
            <defs>
              <linearGradient id="coolwarm" x1="0" y1="0" x2="0" y2="1">
                <stop offset="0" stop-color="#b40426"/><stop offset=".12" stop-color="#d6523f"/><stop offset=".26" stop-color="#f18f72"/><stop offset=".38" stop-color="#f5b79b"/>
                <stop offset=".5" stop-color="#dddddd"/><stop offset=".64" stop-color="#adc9fc"/><stop offset=".8" stop-color="#7b9ff8"/><stop offset="1" stop-color="#3b4cc0"/>
              </linearGradient>
              <linearGradient id="front" x1="0" y1="0" x2="0" y2="1"><stop offset="0" stop-color="#4d4f53"/><stop offset=".4" stop-color="#4b4e53"/><stop offset="1" stop-color="#4e5050"/></linearGradient>
              <linearGradient id="topface" x1="0" y1="0" x2="1" y2="1"><stop offset="0" stop-color="#c5c4be"/><stop offset=".5" stop-color="#c4c4be"/><stop offset="1" stop-color="#c8c4bb"/></linearGradient>
              <clipPath id="top"><path d="M528 153L781 190L893 416L586 401Z"/></clipPath>
              <filter id="soft" x="-20%" y="-20%" width="140%" height="140%"><feGaussianBlur stdDeviation="3"/></filter>
              <filter id="tiny"><feGaussianBlur stdDeviation="1"/></filter>
            </defs>
            <!-- outline behind the solid -->
            <g fill="none" stroke="#b4b5c0">
              <path d="M497 121L440 361L472 654M440 361L471 363M613 121L805 153L784 196M805 153L945 408M945 436L784 642L767 594M784 642L548 654"/>
            </g>
            <path d="M662 130L647 170" stroke="#66080c" stroke-width="2"/>
            <path d="M528 153L471 363L504 609L586 406L586 401Z" fill="#575957"/>
            <path d="M586 401L893 416L765 601L504 609Z" fill="url(#front)"/>
            <!-- wave field on the top face -->
            <path d="M528 153L781 190L893 416L586 401Z" fill="url(#topface)"/>
            <g clip-path="url(#top)">
              <g fill="none" filter="url(#soft)" transform="rotate(36 698 283)" stroke-width="9" opacity=".85">
                <ellipse cx="696" cy="283" rx="62" ry="35" stroke="#b5bfcb" opacity=".5"/>
                <ellipse cx="696" cy="283" rx="77" ry="43" stroke="#d0c3b4" opacity=".5"/>
                <ellipse cx="697" cy="283" rx="92" ry="51" stroke="#b8c1ca" opacity=".35"/>
                <ellipse cx="697" cy="283" rx="106" ry="59" stroke="#d4c1ae" opacity=".75"/>
                <ellipse cx="698" cy="283" rx="120" ry="69" stroke="#b3bfce" opacity=".8"/>
                <ellipse cx="696" cy="283" rx="136" ry="82" stroke="#d2c3b2" opacity=".6"/>
                <ellipse cx="692" cy="283" rx="152" ry="96" stroke="#b8c1cb" opacity=".4" stroke-width="12"/>
                <ellipse cx="690" cy="283" rx="170" ry="111" stroke="#d3c2b1" opacity=".5" stroke-width="12"/>
                <ellipse cx="690" cy="283" rx="188" ry="127" stroke="#bac2c9" opacity=".3" stroke-width="12"/>
              </g>
              <g filter="url(#tiny)">
                <ellipse cx="691" cy="272" rx="3" ry="2" fill="#ea8058"/><ellipse cx="692" cy="277" rx="3" ry="2" fill="#416bdc"/><ellipse cx="693" cy="281" rx="3" ry="2" fill="#ea8058"/>
                <ellipse cx="697" cy="285" rx="3" ry="2" fill="#eaa283"/><path d="M697 274l4 4 6 6-2 3-6-4-2-4z" fill="#4f7ae0"/><path d="M702 274l6-2-2 4z" fill="#e9a88c"/><ellipse cx="666" cy="279" rx="5" ry="4" fill="#d0c3b7"/><ellipse cx="715" cy="295" rx="5" ry="4" fill="#d0c3b7"/>
              </g>
            </g>
            <path d="M505 121L567 405L945 424M567 405L474 654" fill="none" stroke="#c4c5c6"/>
            <path d="M776 415L638 648" stroke="#660205" stroke-width="2"/>
            <path d="M662 130L776 415M638 648L628 605" stroke="#d00808" stroke-width="2"/>
            <path d="M466 376L516 379" stroke="#eee" stroke-width="2"/><path d="M463 373l6 3-6 2z" fill="#aaa69e"/>
            <!-- orientation axes -->
            <path d="M423 586L450 588" stroke="#c01818"/><path d="M423 586L433 566" stroke="#20b020"/><path d="M423 586L417 567" stroke="#a8a030"/>
            <path d="M448 585l8 3-8 3z" fill="#8b0808"/><path d="M430 567l5-8 2 8-4 2z" fill="#0ee00e"/><path d="M414 565l4-2 2 4-3 3z" fill="#b0a010"/>
            <g class="plot-text">
              <text x="418" y="566">Y</text><text x="435" y="565">Z</text><text x="451" y="588">X</text>
            </g>
            <!-- colour legend -->
            <path d="M359 129h9v175h-9z" fill="url(#coolwarm)"/>
            <path d="M368 129.500H459M359 304.500H459M366 145.500h7M366 169.500h7M366 194.500h7M366 219.500h7M366 244.500h7M366 269.500h7" stroke="#d6d7de"/>
            <g class="plot-text">
              <text x="377" y="132">1.8e+05</text><text x="377" y="149">150000</text><text x="377" y="173">100000</text><text x="377" y="198">50000</text><text x="377" y="223">0</text>
              <text x="377" y="248">-50000</text><text x="377" y="273">-100000</text><text x="377" y="308">-1.7e+05</text>
              <text transform="translate(428 263) rotate(-90)">velocity_E_it010000</text>
            </g>
          </svg>
        </div>
      </section>

      <aside class="right">
        <div class="dock-title"><span>Color Map Editor</span><svg><use href="#restore"/></svg><svg><use href="#close"/></svg></div>
        <div class="search">
          <input class="field" aria-label="Search color maps" placeholder="Search ... (use Esc to clear text)">
          <button class="bevel tool" aria-label="Advanced"><svg><use href="#gear"/></svg></button>
          <button class="bevel tool" aria-label="Color map"><svg><use href="#legend"/></svg></button>
          <button class="bevel tool dim" aria-label="Reset color map"><svg><use href="#paste"/></svg></button>
        </div>
        <p class="array-name">Array Name: &lt;none&gt;</p>
        <div class="map-tools">
          <button class="bevel faint" aria-label="Reload"><svg><use href="#reload"/></svg></button>
          <button class="bevel faint" aria-label="Histogram"><svg viewBox="0 0 14 14"><path d="M2 12V9m2 3V8m2 4V9m2 3V7m2 5V9m2 3v-2M4 6l3-4 3 4z" fill="none" stroke="currentColor"/></svg></button>
          <button class="bevel faint" aria-label="Preset"><svg viewBox="0 0 14 14"><path d="M2 12V5h3l1 1h5v2M2 12l3-4h8l-3 4zM6 4l3-3 2 4" fill="none" stroke="currentColor"/></svg></button>
          <button class="bevel views" disabled><svg><use href="#apply"/></svg>Render Views</button>
          <button class="bevel down" aria-label="Auto update"><svg><use href="#apply"/></svg></button>
        </div>
      </aside>
    </main>

    <footer class="status">
      <button class="bevel" aria-label="Abort"><svg viewBox="0 0 8 8"><path d="M1 1h2l1 2 1-2h2v2L6 4l1 1v2H5L4 6 3 7H1V5l1-1-1-1z" fill="#aaa"/></svg></button>
      <div class="progress"></div>
    </footer>
  </div>

  <!-- desktop lyrics floating above the window -->
  <p class="lyric now"><span>Running through my h</span>ead</p>
  <p class="lyric next">Running through my head</p>
</body>
</html>
```
FILE: styles.css
```
* {
  box-sizing: border-box;
}
body {
  margin: 0;
  height: 100vh;
  display: flex;
  flex-direction: column;
  overflow: hidden;
  position: relative;
  background: #efefef;
  color: #111;
  font-family: "Liberation Serif", serif;
  font-size: 9px;
  line-height: 10px;
}
h2, h3, p, ul {
  margin: 0;
  padding: 0;
}
a {
  color: inherit;
  text-decoration: none;
}
button, input, select {
  font: inherit;
  color: inherit;
  margin: 0;
  padding: 0;
  border: 0;
  border-radius: 0;
  background: none;
  min-width: 0;
}
svg {
  display: block;
  flex: none;
}
.defs {
  position: absolute;
  width: 0;
  height: 0;
}

/* window chrome */
.title-bar {
  display: flex;
  align-items: center;
  height: 14px;
  padding: 0 12px 0 1px;
  gap: 3px;
  background: #fff;
  font: 8px/12px "Open Sans", sans-serif;
}
.logo { width: 10px; height: 8px; }
.app-name { flex: 1; }
.win { width: 8px; height: 8px; margin-left: 17px; }
.menu-bar {
  display: flex;
  gap: 7px;
  height: 13px;
  padding-left: 3px;
  font: 8px/14px "Open Sans", sans-serif;
}
.frame {
  flex: 1;
  min-height: 0;
  display: flex;
  flex-direction: column;
  border-left: 1px solid #666;
}

/* toolbars */
.toolbar {
  display: flex;
  height: 21px;
  flex: none;
  border-top: 1px solid #b5b5b5;
}
.group {
  display: flex;
  align-items: center;
  padding: 0 3px 0 7px;
  position: relative;
  border-right: 1px solid #aaa;
  background: linear-gradient(#aaa, #aaa) 2px 2px / 1px 16px no-repeat, linear-gradient(#aaa, #aaa) 4px 2px / 1px 16px no-repeat;
}
.group.last {
  border-right: 0;
}
.group > button {
  width: 19px;
  height: 19px;
  padding: 1px;
}
.group > button svg {
  width: 16px;
  height: 16px;
}
.group > button.down {
  background: #fafafa;
  border: 1px solid #bbb;
  padding: 0;
}
.group > i, .view-bar > i {
  width: 1px;
  height: 15px;
  margin: 0 2px 0 1px;
  background: #bbb;
}
.axis {
  position: relative;
}
.axis em {
  position: absolute;
  font: 6px/6px "Liberation Sans", sans-serif;
  color: #333;
}
.axis.l em { left: 1px; top: 3px; }
.axis.r em { right: 1px; top: 3px; }
.axis.d em { right: 1px; bottom: 1px; }
.field {
  height: 12px;
  padding: 0 1px;
  background: #fff;
  border: 1px solid;
  border-color: #777 #eee #eee #777;
  line-height: 10px;
}
.field::placeholder {
  color: #888;
  opacity: 1;
}
.time {
  width: 67px;
  margin: 0 3px 0 1px;
}
.spin {
  display: flex;
  width: 22px;
  border: 1px solid #666;
  height: 12px;
}
.spin input { width: 12px; padding-left: 1px; color: #888; }
.spin b { font: 6px/5px "DejaVu Sans", sans-serif; }
.combo {
  appearance: none;
  height: 12px;
  padding: 0 12px 0 1px;
  border: 1px solid;
  border-color: #555 #ddd #ddd #555;
  background: linear-gradient(#111, #111) right 2px top 4px / 5px 1px no-repeat, linear-gradient(#111, #111) right 3px top 5px / 3px 1px no-repeat, linear-gradient(#111, #111) right 4px top 6px / 1px 1px no-repeat, linear-gradient(#efefef, #efefef) right / 9px 100% no-repeat, #fff;
}
.combo.off {
  background-color: #f0f0f0;
  border-color: #555;
  color: #888;
}
.array { width: 92px; }
.part { width: 45px; margin-left: 4px; }

/* docks */
.work {
  flex: 1;
  min-height: 0;
  display: grid;
  grid-template-columns: 349px minmax(0, 1fr) 242px;
  column-gap: 4px;
  border-top: 1px solid #bbb;
}
.left, .right, .center {
  display: flex;
  flex-direction: column;
  min-width: 0;
  min-height: 0;
}
.right {
  padding: 0 4px 0 1px;
}
.dock-title {
  display: flex;
  align-items: center;
  height: 12px;
  padding: 0 4px 0 0;
  gap: 6px;
  font: 8px/12px "Open Sans", sans-serif;
}
.dock-title span { flex: 1; }
.dock-title svg { width: 6px; height: 6px; }
.tree {
  list-style: none;
  flex: 1;
  background: #fff;
  border-top: 1px solid #888;
  padding-top: 1px;
}
.tree li {
  display: flex;
  align-items: center;
  height: 14px;
  padding-left: 2px;
}
.host {
  width: 5px;
  height: 9px;
  margin: 0 4px 0 17px;
}
.eye { width: 10px; height: 8px; margin-right: 6px; }
.block { width: 11px; height: 11px; margin-right: 1px; }
.branch {
  width: 9px;
  height: 14px;
  background: linear-gradient(#aaa, #aaa) 3px 0 / 1px 100% no-repeat, linear-gradient(#aaa, #aaa) 3px 50% / 6px 1px no-repeat;
}
.branch.through { background-size: 1px 100%, 0 0; }
.branch.end { background-size: 1px 50%, 6px 1px; }
.branch.box { background: linear-gradient(#555, #555) 2px 7px / 3px 1px no-repeat, linear-gradient(#aaa, #aaa) 1px 5px / 5px 1px no-repeat, linear-gradient(#aaa, #aaa) 1px 9px / 5px 1px no-repeat, linear-gradient(#aaa, #aaa) 1px 5px / 1px 5px no-repeat, linear-gradient(#aaa, #aaa) 5px 5px / 1px 5px no-repeat; }
.tree strong, .section h2, h3, .note, .view-bar strong {
  font-family: "Liberation Mono", monospace;
  font-size: 7px;
  font-weight: bold;
}
.tree strong {
  background: #0a78d6;
  color: #fff;
  padding: 0 2px 0 1px;
}
.tabs {
  display: flex;
  height: 14px;
  padding-top: 2px;
}
.tabs a {
  padding: 0 6px;
  border-right: 1px solid #555;
}
.bevel {
  display: flex;
  align-items: center;
  justify-content: center;
  gap: 3px;
  background: #efefef;
  border: 1px solid;
  border-color: #fff #777 #777 #fff;
  box-shadow: inset -1px -1px #c4c4c4;
}
.bevel svg { width: 11px; height: 11px; }
.bevel:disabled { color: #8a8a8a; }
.actions {
  display: grid;
  grid-template-columns: repeat(4, 1fr);
  margin: 5px 5px 3px 4px;
  height: 17px;
  flex: none;
}
.apply { background: #9fd486; }
.help { color: #2790c9; font: bold 11px/12px "Liberation Sans", sans-serif; }
.search {
  display: flex;
  gap: 3px;
  margin: 0 5px 4px 4px;
}
.search .field { flex: 1; height: 13px; }
.search .tool { width: 13px; height: 13px; }
.props {
  display: flex;
  height: 289px;
  flex: none;
  padding: 0 4px 5px 4px;
}
.form {
  flex: 1;
  min-width: 0;
  display: flex;
  flex-direction: column;
}
.section {
  display: flex;
  gap: 3px;
  height: 18px;
  flex: none;
  margin-bottom: 3px;
}
.section h2 {
  flex: 1;
  height: 17px;
  border-top: 2px solid #888;
  border-left: 1px solid #888;
  border-bottom: 1px solid #fff;
  line-height: 14px;
  padding-left: 20px;
  background: linear-gradient(#4567bd, #4567bd) 7px 5px / 8px 3px no-repeat;
}
.section .tool { width: 18px; height: 18px; }
.dim { color: #777; }
.faint { color: #aaa; }
.blue { color: #337ab9; }
.section + .section { margin: 6px 0 0; }
.line {
  display: flex;
  align-items: center;
  gap: 2px;
}
.line .combo, .line .field { flex: 1; }
h3 {
  line-height: 10px;
  margin: 4px 0 3px;
  border-bottom: 1px solid #bbb;
}
.check {
  display: flex;
  align-items: center;
  gap: 3px;
  height: 13px;
}
.check input {
  appearance: none;
  width: 8px;
  height: 8px;
  background: #fff;
  border: 1px solid;
  border-color: #666 #ddd #ddd #666;
}
.check input:checked::before {
  content: "✓";
  display: block;
  font: bold 8px/6px "DejaVu Sans", sans-serif;
}
.vec { height: 13px; gap: 1px; }
.vec label { width: 26px; flex: none; }
.note {
  line-height: 9px;
  padding-right: 8px;
}
.normals {
  display: grid;
  grid-template-columns: 1fr 1fr;
  grid-auto-rows: 14px;
  row-gap: 2px;
  column-gap: 1px;
  padding-bottom: 2px;
  border-bottom: 1px solid #bbb;
}
.normals .bevel { gap: 0; }
.normals .first { grid-column: 1; }
.normals .wide { grid-column: 1 / 3; }
.offset {
  padding: 5px 0 3px;
  margin-bottom: 3px;
  border-bottom: 1px solid #bbb;
}
.check + .section { margin: 3px 0 0; }
.scroll {
  width: 11px;
  flex: none;
  display: flex;
  flex-direction: column;
  background: #f7f7f7;
}
.scroll .bevel { height: 11px; flex: none; }
.scroll .bevel svg { width: 5px; height: 4px; }
.thumb {
  height: 146px;
  margin-bottom: auto;
  background: #efefef;
  border-right: 1px solid #777;
  border-bottom: 1px solid #777;
}

/* render view */
.layouts {
  display: flex;
  height: 14px;
  padding: 2px 0 0 6px;
}
.layouts a {
  display: flex;
  align-items: center;
  gap: 3px;
  height: 12px;
  padding-right: 8px;
  border-right: 1px solid #444;
}
.layouts a + a { padding: 0 6px; }
.layouts svg { width: 9px; height: 9px; }
.view-bar {
  display: flex;
  align-items: center;
  height: 14px;
  flex: none;
  padding: 0 1px;
  background: #f4f4f4;
}
.view-bar button {
  width: 12px;
  height: 12px;
  padding: 0 1px;
  flex: none;
}
.view-bar button svg { width: 10px; height: 10px; }
.view-bar > i { height: 9px; margin: 0 1px; }
.view-bar strong {
  margin: 0 6px 0 auto;
  text-decoration: underline;
}
.view-bar .three { font: 7px/12px "Liberation Sans", sans-serif; padding: 0; }
.view-bar .split { padding: 0; }
.view-bar .split svg { width: 8px; height: 8px; }
.view-bar .split + .split { margin-left: 1px; }
.green { color: #4b9c3b; }
.red { color: #dd4a3c; }
.grey { color: #888; }
.render {
  flex: 1;
  min-height: 0;
  border: 2px solid #1414f0;
  background: #52566c;
}
.render svg {
  width: 100%;
  height: 100%;
}
.plot-text {
  font: 10px Lato, sans-serif;
  fill: #e4e4ea;
}

/* colour map dock */
.right .search { margin: 6px 2px 3px 4px; }
.array-name { padding: 0 4px; }
.map-tools {
  display: flex;
  gap: 2px;
  margin: 4px 2px 0 4px;
}
.map-tools .bevel { width: 18px; height: 17px; }
.map-tools .views { width: 67px; margin-left: auto; gap: 1px; white-space: nowrap; }
.map-tools .down { background: #f8f8f8; border-color: #777 #fff #fff #777; box-shadow: none; }

.status {
  display: flex;
  justify-content: center;
  height: 15px;
  flex: none;
  padding: 1px 0 1px 595px;
  gap: 2px;
  border-top: 1px solid #aaa;
}
.status .bevel { width: 13px; height: 12px; flex: none; }
.status .bevel svg { width: 8px; height: 8px; }
.progress { flex: 1; border: 1px solid; border-color: #bbb #fff #fff #bbb; }

.lyric {
  position: absolute;
  font: 12px/18px "Noto Sans", sans-serif;
  white-space: nowrap;
  color: #dcdcdc;
  text-shadow: 0 0 1px #222, 0 0 1px #222, 1px 0 1px #333, -1px 0 1px #333, 0 1px 1px #333, 0 -1px 1px #333;
}
.lyric span {
  color: #2b93ea;
}
.lyric.now {
  right: 230px;
  bottom: 45px;
}
.lyric.next {
  right: 38px;
  bottom: 29px;
}
```
